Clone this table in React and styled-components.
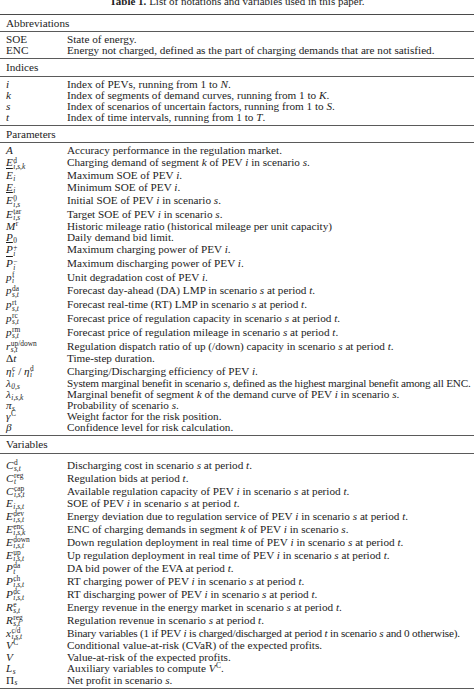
import React from "react";
import styled, { createGlobalStyle } from "styled-components";

const GlobalStyle = createGlobalStyle`
  html, body {
    margin: 0;
    padding: 0;
    background: #ffffff;
  }
  body {
    font-family: "Liberation Serif", "DejaVu Serif", serif;
    color: #1d1d1d;
  }
`;

const Page = styled.div`
  width: 474px;
  overflow: hidden;
`;

const Caption = styled.div`
  margin-top: -4px;
  height: 17.5px;
  font-size: 11px;
  line-height: 11px;
  text-align: center;
  white-space: nowrap;
  b {
    font-weight: bold;
  }
`;

const Table = styled.div`
  border-top: 1.5px solid #4a4a4a;
`;

const Section = styled.div`
  border-bottom: 1.5px solid #5a5a5a;
`;

const SectionHead = styled.div`
  height: 16.5px;
  display: flex;
  align-items: center;
  padding-left: 6px;
  font-size: 11.2px;
  border-bottom: 1.5px solid #5a5a5a;
`;

const SectionBody = styled.div`
  padding: ${(p) => p.$pt || 2}px 0 2px;
`;

const Row = styled.div`
  display: grid;
  grid-template-columns: 61px 1fr;
  align-items: center;
  height: ${(p) => p.$h || 11}px;
  padding-left: 6px;
  font-size: 11.2px;
  line-height: 11px;
  white-space: nowrap;
`;

const SymCell = styled.span`
  display: inline-flex;
  align-items: center;
`;

const Letter = styled.span`
  font-style: ${(p) => (p.$up ? "normal" : "italic")};
  text-decoration: ${(p) =>
    p.$over ? "overline" : p.$under ? "underline" : "none"};
  text-decoration-thickness: 0.7px;
`;

const Scripts = styled.span`
  display: inline-flex;
  flex-direction: column;
  font-size: 7.4px;
  line-height: 6px;
  margin-left: 0.5px;
  transform: translateY(0.8px);
`;

const Sup = styled.span`
  font-style: ${(p) => (p.$it ? "italic" : "normal")};
  min-height: 6px;
`;

const Sub = styled.span`
  font-style: ${(p) => (p.$up ? "normal" : "italic")};
  min-height: 6px;
`;

const LowSub = styled.span`
  font-size: 7.4px;
  font-style: ${(p) => (p.$up ? "normal" : "italic")};
  position: relative;
  top: 2.5px;
  margin-left: 0.5px;
`;

const HighSup = styled.span`
  font-size: 7.4px;
  font-style: ${(p) => (p.$it ? "italic" : "normal")};
  position: relative;
  top: -3.5px;
  margin-left: 0.5px;
`;

const I = styled.i`
  font-style: italic;
`;

const Desc = styled.span`
  letter-spacing: ${(p) => (p.$tight ? "-0.2px" : "normal")};
`;

// symbol with optional stacked super/subscripts
function Sym({ b, up, over, under, sup, sub, subUp, supIt }) {
  const base = (
    <Letter $up={up} $over={over} $under={under}>
      {b}
    </Letter>
  );
  if (sup && sub) {
    return (
      <SymCell>
        {base}
        <Scripts>
          <Sup $it={supIt}>{sup}</Sup>
          <Sub $up={subUp}>{sub}</Sub>
        </Scripts>
      </SymCell>
    );
  }
  return (
    <SymCell>
      {base}
      {sub && <LowSub $up={subUp}>{sub}</LowSub>}
      {sup && <HighSup $it={supIt}>{sup}</HighSup>}
    </SymCell>
  );
}

const T = 13.7;
const TV = 13;

const sections = [
  {
    title: "Abbreviations",
    rows: [
      { sym: <Sym b="SOE" up />, desc: "State of energy." },
      {
        sym: <Sym b="ENC" up />,
        desc: "Energy not charged, defined as the part of charging demands that are not satisfied.",
      },
    ],
  },
  {
    title: "Indices",
    rows: [
      { sym: <Sym b="i" />, desc: <>Index of PEVs, running from 1 to <I>N</I>.</> },
      {
        sym: <Sym b="k" />,
        desc: <>Index of segments of demand curves, running from 1 to <I>K</I>.</>,
      },
      {
        sym: <Sym b="s" />,
        desc: <>Index of scenarios of uncertain factors, running from 1 to <I>S</I>.</>,
      },
      { sym: <Sym b="t" />, desc: <>Index of time intervals, running from 1 to <I>T</I>.</> },
    ],
  },
  {
    title: "Parameters",
    rows: [
      { sym: <Sym b="A" />, desc: "Accuracy performance in the regulation market." },
      {
        h: T,
        sym: <Sym b="E" sup="d" sub="i,s,k" />,
        desc: <>Charging demand of segment <I>k</I> of PEV <I>i</I> in scenario <I>s</I>.</>,
      },
      { h: 12, sym: <Sym b="E" over sub="i" />, desc: <>Maximum SOE of PEV <I>i</I>.</> },
      { h: 12, sym: <Sym b="E" under sub="i" />, desc: <>Minimum SOE of PEV <I>i</I>.</> },
      {
        h: T,
        sym: <Sym b="E" sup="0" sub="i,s" />,
        desc: <>Initial SOE of PEV <I>i</I> in scenario <I>s</I>.</>,
      },
      {
        h: T,
        sym: <Sym b="E" sup="tar" sub="i,s" />,
        desc: <>Target SOE of PEV <I>i</I> in scenario <I>s</I>.</>,
      },
      {
        sym: <Sym b="M" sup="r" />,
        desc: "Historic mileage ratio (historical mileage per unit capacity)",
      },
      { sym: <Sym b="P" sub="0" subUp />, desc: "Daily demand bid limit." },
      {
        h: T,
        sym: <Sym b="P" over sup="+" sub="i" />,
        desc: <>Maximum charging power of PEV <I>i</I>.</>,
      },
      {
        h: T,
        sym: <Sym b="P" over sup="−" sub="i" />,
        desc: <>Maximum discharging power of PEV <I>i</I>.</>,
      },
      {
        h: T,
        sym: <Sym b="p" sup="f" sub="i" />,
        desc: <>Unit degradation cost of PEV <I>i</I>.</>,
      },
      {
        h: T,
        sym: <Sym b="p" sup="da" sub="s,t" />,
        desc: <>Forecast day-ahead (DA) LMP in scenario <I>s</I> at period <I>t</I>.</>,
      },
      {
        h: T,
        sym: <Sym b="p" sup="rt" sub="s,t" />,
        desc: <>Forecast real-time (RT) LMP in scenario <I>s</I> at period <I>t</I>.</>,
      },
      {
        h: T,
        sym: <Sym b="p" sup="rc" sub="s,t" />,
        desc: <>Forecast price of regulation capacity in scenario <I>s</I> at period <I>t</I>.</>,
      },
      {
        h: T,
        sym: <Sym b="p" sup="rm" sub="s,t" />,
        desc: <>Forecast price of regulation mileage in scenario <I>s</I> at period <I>t</I>.</>,
      },
      {
        h: 14.5,
        sym: <Sym b="r" sup="up/down" sub="s,t" />,
        desc: (
          <>
            Regulation dispatch ratio of up (/down) capacity in scenario <I>s</I> at period{" "}
            <I>t</I>.
          </>
        ),
      },
      {
        sym: (
          <SymCell>
            <Letter $up>Δ</Letter>
            <Letter>t</Letter>
          </SymCell>
        ),
        desc: "Time-step duration.",
      },
      {
        h: T,
        sym: (
          <SymCell>
            <Sym b="η" sup="c" sub="i" />
            <Letter $up>&nbsp;/&nbsp;</Letter>
            <Sym b="η" sup="d" sub="i" />
          </SymCell>
        ),
        desc: <>Charging/Discharging efficiency of PEV <I>i</I>.</>,
      },
      {
        sym: <Sym b="λ" sub="0,s" />,
        tight: true,
        desc: (
          <>
            System marginal benefit in scenario <I>s</I>, defined as the highest marginal benefit
            among all ENC.
          </>
        ),
      },
      {
        sym: <Sym b="λ" sub="i,s,k" />,
        desc: (
          <>
            Marginal benefit of segment <I>k</I> of the demand curve of PEV <I>i</I> in scenario{" "}
            <I>s</I>.
          </>
        ),
      },
      { sym: <Sym b="π" sub="s" />, desc: <>Probability of scenario <I>s</I>.</> },
      { sym: <Sym b="γ" sup="C" />, desc: "Weight factor for the risk position." },
      { sym: <Sym b="β" />, desc: "Confidence level for risk calculation." },
    ],
  },
  {
    title: "Variables",
    pt: 5,
    rows: [
      {
        h: TV,
        sym: <Sym b="C" sup="d" sub="s,t" />,
        desc: <>Discharging cost in scenario <I>s</I> at period <I>t</I>.</>,
      },
      {
        h: TV,
        sym: <Sym b="C" sup="reg" sub="t" />,
        desc: <>Regulation bids at period <I>t</I>.</>,
      },
      {
        h: TV,
        sym: <Sym b="C" sup="cap" sub="i,s,t" />,
        desc: (
          <>
            Available regulation capacity of PEV <I>i</I> in scenario <I>s</I> at period <I>t</I>.
          </>
        ),
      },
      {
        h: 12,
        sym: <Sym b="E" sub="i,s,t" />,
        desc: <>SOE of PEV <I>i</I> in scenario <I>s</I> at period <I>t</I>.</>,
      },
      {
        h: TV,
        sym: <Sym b="E" sup="dev" sub="i,s,t" />,
        desc: (
          <>
            Energy deviation due to regulation service of PEV <I>i</I> in scenario <I>s</I> at
            period <I>t</I>.
          </>
        ),
      },
      {
        h: TV,
        sym: <Sym b="E" sup="enc" sub="i,s,k" />,
        desc: (
          <>
            ENC of charging demands in segment <I>k</I> of PEV <I>i</I> in scenario <I>s</I>.
          </>
        ),
      },
      {
        h: TV,
        sym: <Sym b="E" sup="down" sub="i,s,t" />,
        desc: (
          <>
            Down regulation deployment in real time of PEV <I>i</I> in scenario <I>s</I> at period{" "}
            <I>t</I>.
          </>
        ),
      },
      {
        h: TV,
        sym: <Sym b="E" sup="up" sub="i,s,t" />,
        desc: (
          <>
            Up regulation deployment in real time of PEV <I>i</I> in scenario <I>s</I> at period{" "}
            <I>t</I>.
          </>
        ),
      },
      {
        h: TV,
        sym: <Sym b="P" sup="da" sub="t" />,
        desc: <>DA bid power of the EVA at period <I>t</I>.</>,
      },
      {
        h: TV,
        sym: <Sym b="P" sup="ch" sub="i,s,t" />,
        desc: (
          <>
            RT charging power of PEV <I>i</I> in scenario <I>s</I> at period <I>t</I>.
          </>
        ),
      },
      {
        h: TV,
        sym: <Sym b="P" sup="dc" sub="i,s,t" />,
        desc: (
          <>
            RT discharging power of PEV <I>i</I> in scenario <I>s</I> at period <I>t</I>.
          </>
        ),
      },
      {
        h: TV,
        sym: <Sym b="R" sup="e" sub="s,t" />,
        desc: (
          <>
            Energy revenue in the energy market in scenario <I>s</I> at period <I>t</I>.
          </>
        ),
      },
      {
        h: TV,
        sym: <Sym b="R" sup="reg" sub="s,t" />,
        desc: <>Regulation revenue in scenario <I>s</I> at period <I>t</I>.</>,
      },
      {
        h: TV,
        tight: true,
        sym: <Sym b="x" sup="c/d" sub="i,s,t" />,
        desc: (
          <>
            Binary variables (1 if PEV <I>i</I> is charged/discharged at period <I>t</I> in
            scenario <I>s</I> and 0 otherwise).
          </>
        ),
      },
      {
        h: 12,
        sym: <Sym b="V" sup="C" />,
        desc: "Conditional value-at-risk (CVaR) of the expected profits.",
      },
      { sym: <Sym b="V" />, desc: "Value-at-risk of the expected profits." },
      {
        h: 12,
        sym: <Sym b="L" sub="s" />,
        desc: (
          <>
            Auxiliary variables to compute <Sym b="V" sup="C" />.
          </>
        ),
      },
      { sym: <Sym b="Π" up sub="s" />, desc: <>Net profit in scenario <I>s</I>.</> },
    ],
  },
];

export default function App() {
  return (
    <Page>
      <GlobalStyle />
      <Caption>
        <b>Table 1.</b> List of notations and variables used in this paper.
      </Caption>
      <Table>
        {sections.map((sec) => (
          <Section key={sec.title}>
            <SectionHead>{sec.title}</SectionHead>
            <SectionBody $pt={sec.pt}>
              {sec.rows.map((r, i) => (
                <Row key={i} $h={r.h}>
                  {r.sym}
                  <Desc $tight={r.tight}>{r.desc}</Desc>
                </Row>
              ))}
            </SectionBody>
          </Section>
        ))}
      </Table>
    </Page>
  );
}
